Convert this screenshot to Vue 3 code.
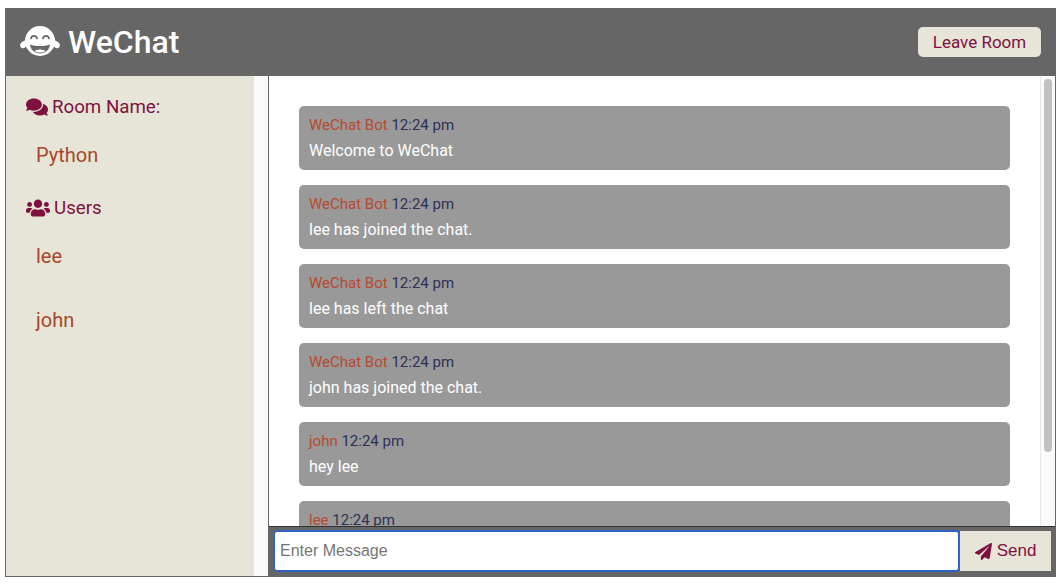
<template>
  <div class="chat-container">
    <header class="chat-header">
      <h1 class="logo">
        <svg class="logo-icon" viewBox="0 0 40 36" aria-hidden="true">
          <circle cx="20" cy="17" r="15" fill="#fff" />
          <path d="M6.500 16c-3 .6-5.900 2.600-6.300 4.600C-.2 22.800 1.600 24.600 3.800 24.200 6.400 23.700 7.200 19.500 6.500 16z" fill="#fff" />
          <path d="M33.500 16c3 .6 5.900 2.600 6.300 4.600.4 2.200-1.400 4-3.600 3.600C33.600 23.700 32.800 19.500 33.500 16z" fill="#fff" />
          <path d="M11 14.500c.8-3.400 5.200-3.400 6 0M23 14.500c.8-3.400 5.200-3.400 6 0" fill="none" stroke="#666" stroke-width="1.700" stroke-linecap="round" />
          <path d="M10 20.500c3 1 6.400 1.500 10 1.500s7-.5 10-1.500c-.6 5.400-4.800 9-10 9s-9.400-3.600-10-9z" fill="#666" />
          <path d="M14.500 27c1.500-1 3.400-1.500 5.500-1.500s4 .5 5.500 1.500c-1.500 1-3.400 1.500-5.500 1.500s-4-.5-5.500-1.500z" fill="#fff" />
        </svg>
        WeChat
      </h1>
      <button class="leave-btn">Leave Room</button>
    </header>

    <div class="chat-body">
      <aside class="sidebar">
        <h3 class="side-title">
          <svg class="side-icon comments" viewBox="0 0 576 512" aria-hidden="true">
            <path d="M416 192c0-88.400-93.100-160-208-160S0 103.600 0 192c0 34.300 14.100 65.900 38 92-13.400 30.200-35.500 54.200-35.800 54.500-2.200 2.300-2.800 5.700-1.500 8.700S4.800 352 8 352c36.600 0 66.900-12.300 88.700-25 32.200 15.700 70.300 25 111.300 25 114.900 0 208-71.600 208-160zm122 220c23.900-26 38-57.700 38-92 0-66.900-53.500-124.200-129.300-148.100.9 6.600 1.300 13.300 1.300 20.100 0 105.900-107.700 192-240 192-10.800 0-21.300-.8-31.700-1.900C207.800 439.600 281.800 480 368 480c41 0 79.100-9.200 111.300-25 21.800 12.700 52.100 25 88.700 25 3.200 0 6.100-1.900 7.300-4.800 1.300-2.900.7-6.300-1.500-8.700-.3-.3-22.400-24.200-35.800-54.500z" />
          </svg>
          Room Name:
        </h3>
        <h2 class="room-name">Python</h2>
        <h3 class="side-title users-title">
          <svg class="side-icon users" viewBox="0 0 640 512" aria-hidden="true">
            <path d="M96 224c35.300 0 64-28.700 64-64s-28.700-64-64-64-64 28.700-64 64 28.700 64 64 64zm448 0c35.300 0 64-28.700 64-64s-28.700-64-64-64-64 28.700-64 64 28.700 64 64 64zm32 32h-64c-17.600 0-33.500 7.100-45.100 18.600 40.300 22.100 68.900 62 75.100 109.400h66c17.700 0 32-14.300 32-32v-32c0-35.300-28.700-64-64-64zm-256 0c61.900 0 112-50.100 112-112S381.900 32 320 32 208 82.100 208 144s50.100 112 112 112zm76.800 32h-8.300c-20.800 10-43.900 16-68.500 16s-47.600-6-68.500-16h-8.300C179.600 288 128 339.600 128 403.200V432c0 26.500 21.500 48 48 48h288c26.500 0 48-21.500 48-48v-28.800c0-63.600-51.600-115.200-115.200-115.200zm-223.700-13.400C161.500 263.100 145.600 256 128 256H64c-35.300 0-64 28.700-64 64v32c0 17.700 14.300 32 32 32h65.900c6.300-47.400 34.900-87.300 75.200-109.400z" />
          </svg>
          Users
        </h3>
        <ul class="user-list">
          <li v-for="u in users" :key="u">{{ u }}</li>
        </ul>
      </aside>
      <div class="track side-track"></div>

      <div class="chat-column">
        <div class="messages-row">
          <main class="messages">
            <div v-for="(m, i) in messages" :key="i" class="message">
              <p class="meta"><span class="author">{{ m.author }}</span> <span class="time">12:24 pm</span></p>
              <p class="text">{{ m.text }}</p>
            </div>
          </main>
          <div class="track main-track"><div class="thumb"></div></div>
        </div>
        <form class="chat-form" @submit.prevent>
          <input class="msg-input" type="text" placeholder="Enter Message" />
          <button class="send-btn" type="submit">
            <svg class="send-icon" viewBox="0 0 512 512" aria-hidden="true">
              <path d="M476 3.200L12.500 270.600c-18.100 10.400-15.800 35.600 2.200 43.200L121 358.400l287.300-253.200c5.500-4.900 13.300 2.600 8.600 8.300L176 407v80.500c0 23.600 28.500 32.900 42.500 15.800L282 426l124.600 52.200c14.200 6 30.400-2.900 33-18.200l72-432C515 7.800 493.300-6.800 476 3.200z" />
            </svg>
            Send
          </button>
        </form>
      </div>
    </div>
  </div>
</template>

<script setup>
const users = ['lee', 'john']

const messages = [
  { author: 'WeChat Bot', text: 'Welcome to WeChat' },
  { author: 'WeChat Bot', text: 'lee has joined the chat.' },
  { author: 'WeChat Bot', text: 'lee has left the chat' },
  { author: 'WeChat Bot', text: 'john has joined the chat.' },
  { author: 'john', text: 'hey lee' },
  { author: 'lee', text: 'hi john' }
]
</script>

<style scoped>
.chat-container {
  width: 1051px;
  height: 569px;
  margin: 8px 0 0 5px;
  box-sizing: border-box;
  display: flex;
  flex-direction: column;
  font-family: Roboto, sans-serif;
  background: #fff;
  border: 1px solid #666;
  border-top: 0;
}

.chat-header {
  height: 68px;
  flex-shrink: 0;
  margin: 0 -1px;
  padding: 0 15px;
  display: flex;
  align-items: center;
  justify-content: space-between;
  background: #666;
}

.logo {
  margin: 0;
  display: flex;
  align-items: center;
  gap: 8px;
  font-size: 32px;
  font-weight: 500;
  color: #fff;
}

.logo-icon {
  width: 40px;
  height: 36px;
}

.leave-btn {
  height: 30px;
  width: 123px;
  padding: 0;
  border: 0;
  border-radius: 5px;
  background: #e6e5d8;
  color: #7e1040;
  font-family: Roboto, sans-serif;
  font-size: 17px;
}

.chat-body {
  flex: 1;
  min-height: 0;
  display: flex;
}

.sidebar {
  width: 248px;
  flex-shrink: 0;
  box-sizing: border-box;
  padding: 20px 20px 0;
  background: #e6e5d8;
}

.track {
  width: 14px;
  flex-shrink: 0;
  box-sizing: border-box;
  background: #fafafa;
}

.side-title {
  margin: 0;
  display: flex;
  align-items: center;
  gap: 4px;
  height: 22px;
  font-size: 18.72px;
  font-weight: 400;
  color: #7e1040;
}

.side-icon {
  fill: #7e1040;
}

.comments {
  width: 22px;
  height: 20px;
}

.users {
  width: 24px;
  height: 20px;
}

.room-name {
  margin: 25px 0 0 10px;
  font-size: 20px;
  line-height: 24px;
  font-weight: 400;
  color: #a8452a;
}

.users-title {
  margin-top: 30px;
}

.user-list {
  margin: -1px 0 0;
  padding: 0;
  list-style: none;
}

.user-list li {
  margin: 26px 0 0 10px;
  height: 38px;
  font-size: 20px;
  line-height: 24px;
  color: #a8452a;
}

.chat-column {
  flex: 1;
  min-width: 0;
  display: flex;
  flex-direction: column;
  border-left: 1px solid #666;
}

.messages-row {
  flex: 1;
  min-height: 0;
  display: flex;
}

.messages {
  flex: 1;
  min-width: 0;
  padding: 30px 30px 0;
  overflow: hidden;
}

.main-track {
  position: relative;
  width: 15px;
  border-left: 1px solid #e8e8e8;
}

.thumb {
  position: absolute;
  top: 3px;
  left: 3px;
  width: 8px;
  height: 373px;
  border-radius: 4px;
  background: #c1c1c1;
}

.message {
  height: 64px;
  margin-bottom: 15px;
  box-sizing: border-box;
  padding: 10px;
  border-radius: 5px;
  background: #999;
}

.meta {
  margin: 0 0 7px;
  font-size: 15px;
  line-height: 18px;
}

.author {
  color: #b8492f;
}

.time {
  color: #2e3056;
}

.text {
  margin: 0;
  font-size: 16px;
  line-height: 19px;
  color: #fff;
}

.chat-form {
  height: 50px;
  flex-shrink: 0;
  box-sizing: border-box;
  padding: 4px 4px 5px 5px;
  display: flex;
  background: #666;
  border-top: 1px solid #333;
}

.msg-input {
  flex: 1;
  min-width: 0;
  box-sizing: border-box;
  position: relative;
  z-index: 1;
  padding: 0 5px;
  border: 1px solid #2f62c9;
  border-radius: 3px;
  outline: 1px solid #2f62c9;
  background: #fff;
  font-family: "Liberation Sans", sans-serif;
  font-size: 16px;
}

.msg-input::placeholder {
  color: #757575;
  opacity: 1;
}

.send-btn {
  width: 91px;
  margin-left: 1px;
  display: flex;
  align-items: center;
  justify-content: center;
  gap: 5px;
  padding: 0;
  border: 0;
  background: #e6e5d8;
  color: #7e1040;
  font-family: "Liberation Sans", sans-serif;
  font-size: 17px;
}

.send-icon {
  width: 17px;
  height: 17px;
  fill: #7e1040;
}
</style>

<style>
body {
  background: #fff;
}
</style>
